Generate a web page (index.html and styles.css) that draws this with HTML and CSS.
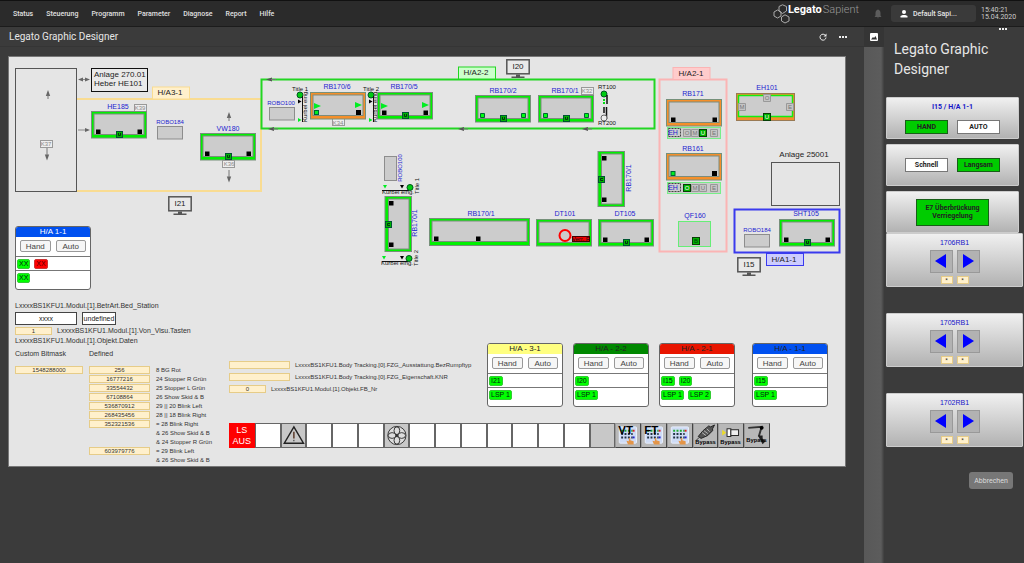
FILE: index.html
```html
<!DOCTYPE html>
<html lang="de">
    <head>
    <meta charset="utf-8">
    <title>Legato Graphic Designer</title>
    <link rel="stylesheet" href="styles.css">
    </head>
    <body>
    <header class="topbar">
        <nav class="menu">
            <a href="#">Status</a>
            <a href="#">Steuerung</a>
            <a href="#">Programm</a>
            <a href="#">Parameter</a>
            <a href="#">Diagnose</a>
            <a href="#">Report</a>
            <a href="#">Hilfe</a>
        </nav>
        <div class="logo">
            <svg width="18" height="20" viewBox="0 0 18 20" fill="none" stroke="#aaa">
                <path d="M6 2.500 9.500 .8 13.500 2.500V7L9.500 9.500 6 7zM1 8 4.500 6 8 8V12L4.500 14 1 12zM8.500 13 12 10.800 16 13V17L12 19 8.500 17z"/>
            </svg>
            <strong>Legato</strong><span>Sapient</span>
        </div>
        <svg class="bell" width="8" height="10" viewBox="0 0 8 10"><path d="M4 0.500C5.500 1 6.500 2 6.500 4V6.500L7.500 8H.5L1.500 6.500V4C1.500 2 2.500 1 4 .5zM3 8.500H5L4 9.500z" fill="#5c5c5c"/></svg>
        <button class="user" type="button">
            <svg width="8" height="8" viewBox="0 0 8 8" fill="#fff"><circle cx="4" cy="2" r="2"/><path d="M.5 7.500V6.500C.5 4.500 7.500 4.500 7.500 6.500V7.500z"/></svg>
            Default Sapi...
        </button>
        <div class="clock">15:40:21<br>15.04.2020</div>
    </header>

    <div class="layout">
    <main class="main">
        <div class="titlebar">
            <h1>Legato Graphic Designer</h1>
            <button class="icon" type="button" aria-label="Neu laden"><svg width="8" height="8" viewBox="0 0 8 8"><path d="M6.500 2.500A3 3 0 1 0 7 4.500" fill="none" stroke="#eee"/><path d="M7.500 .5V3.500H4.500z" fill="#eee"/></svg></button>
            <button class="icon" type="button" aria-label="Mehr"><svg width="8" height="8" viewBox="0 0 8 8" fill="#eee"><rect x="0" y="3" width="2" height="2"/><rect x="3" y="3" width="2" height="2"/><rect x="6" y="3" width="2" height="2"/></svg></button>
        </div>

        <div class="canvas">
            <svg class="plant" viewBox="9 57 836 226">
                <defs>
                    <symbol id="station" viewBox="0 0 56 28">
                        <rect x=".5" y=".5" width="55" height="26.500" fill="currentColor" stroke="#76907a"/>
                        <rect x="3" y="3" width="50" height="20.500" fill="#ccc" stroke="#7c8c7c"/>
                    </symbol>
                    <symbol id="dots" viewBox="0 0 56 28">
                        <path d="M5 18.500h4.500v4.500h-4.500zM46.500 18.500h4.500v4.500h-4.500z"/>
                    </symbol>
                    <symbol id="dots-on" viewBox="0 0 56 28">
                        <path d="M5.500 18.500h4v4h-4zM46.500 18.500h4v4h-4z" fill="#0f1" stroke="#063"/>
                    </symbol>
                    <symbol id="badge" viewBox="0 0 7 7">
                        <rect x=".5" y=".5" width="6" height="6" fill="#00b400" stroke="#053"/>
                        <path d="M2.500 2V4.500H4.500V2" fill="none" stroke="#031"/>
                    </symbol>
                    <symbol id="robot" viewBox="0 0 26 14">
                        <rect x=".5" y=".5" width="25" height="12.500" fill="#ccc" stroke="#8d8d8d"/>
                    </symbol>
                    <symbol id="screen" viewBox="0 0 24 20">
                        <rect x=".8" y=".8" width="22.400" height="14" fill="#e9e9e9" stroke="#555" stroke-width="1.500"/>
                        <path d="M10 15.500H14V17.500H18.500V19H5.500V17.500H10z" fill="#555"/>
                    </symbol>
                    <symbol id="up" viewBox="0 0 6 10">
                        <path d="M3 0 5.200 6H.8z" fill="#666"/><path d="M3 5V9" stroke="#777"/>
                    </symbol>
                    <symbol id="down" viewBox="0 0 6 13">
                        <path d="M3 12.500 5.200 6.500H.8z" fill="#666"/><path d="M3 0V7" stroke="#777"/>
                    </symbol>
                    <symbol id="flow" viewBox="0 0 10 6">
                        <path d="M0 3 6 1V5z" fill="#555"/><path d="M5 3H10" stroke="#777"/>
                    </symbol>
                    <symbol id="play" viewBox="0 0 7 6"><path d="M0 0 7 3 0 6z" fill="#0e2"/></symbol>
                    <symbol id="crane" viewBox="0 0 12 36">
                        <circle cx="4" cy="4" r="3" fill="#0c1" stroke="#052"/>
                        <path d="M6.500 5V31" stroke="#111"/>
                        <path d="M2 8.500 5.500 10.500 2 12.500z"/>
                        <path d="M2 27 5.500 29 2 31z" fill="#0e2"/>
                    </symbol>
                </defs>

                <!-- Heber und H/A 3-1 -->
                <path class="area yellow" d="M77 99H261V191H77"/>
                <rect class="frame" x="15.500" y="68.500" width="61" height="123"/>
                <use href="#up" x="45" y="90" width="6" height="10"/>
                <rect class="key" x="40.500" y="140.500" width="12" height="7"/>
                <text class="keytext" x="46" y="146">K37</text>
                <use href="#down" x="44" y="148" width="6" height="13"/>
                <rect class="note" x="91.500" y="68.500" width="56" height="23"/>
                <text class="big" x="94" y="77">Anlage 270.01</text>
                <text class="big" x="94" y="86">Heber HE101</text>
                <path class="line" d="M79 79.500H89M78 130H87"/>
                <path class="head" d="M78 79.500 83 77.500V81.500zM90 79.500 85 77.500V81.500zM90 130 85 128V132z"/>
                <rect class="tag yellow" x="152.500" y="87" width="37" height="12"/>
                <text class="big mid" x="170" y="95">H/A3-1</text>

                <text class="name" x="118" y="109">HE185</text>
                <rect class="key" x="134.500" y="104.500" width="12" height="7"/>
                <text class="keytext" x="140" y="110">K39</text>
                <g class="ok" transform="translate(91 111)">
                    <use href="#station" width="56" height="28"/><use href="#dots" width="56" height="28"/><use href="#badge" x="25" y="20" width="7" height="7"/>
                </g>
                <text class="name small" x="170" y="124">ROBO184</text>
                <use href="#robot" x="157" y="126" width="26" height="14"/>
                <use href="#up" x="226" y="112" width="6" height="10"/>
                <text class="name" x="228" y="131">VW180</text>
                <g class="ok" transform="translate(200 133)">
                    <use href="#station" width="56" height="28"/><use href="#dots" width="56" height="28"/><use href="#badge" x="25" y="20" width="7" height="7"/>
                </g>
                <rect class="key" x="222.500" y="160.500" width="12" height="7"/>
                <text class="keytext" x="229" y="166">K36</text>
                <use href="#down" x="226" y="170" width="6" height="13"/>
                <use href="#screen" x="168" y="196" width="24" height="20"/>
                <text class="big mid" x="180" y="206">I21</text>

                <!-- H/A 2-2 -->
                <rect class="area green" x="261.500" y="79.500" width="393" height="49"/>
                <use href="#flow" x="266" y="76.500" width="10" height="6"/>
                <use href="#flow" x="268" y="126" width="10" height="6"/>
                <use href="#flow" x="458" y="126" width="10" height="6"/>
                <use href="#flow" x="582" y="126" width="10" height="6"/>
                <rect class="tag green" x="458.500" y="67" width="37" height="12"/>
                <text class="big mid" x="476" y="75">H/A2-2</text>
                <use href="#screen" x="506" y="59" width="24" height="20"/>
                <text class="big mid" x="518" y="69">I20</text>
                <text class="name small" x="281" y="105">ROBO100</text>
                <use href="#robot" x="269" y="107" width="26" height="14"/>
                <text class="cranetext mid" x="300" y="91">Title 1</text>
                <use href="#crane" x="296" y="91" width="12" height="36"/>
                <text class="cranetext" transform="translate(307 122) rotate(-90)">Kurbel eing.</text>
                <text class="name" x="337" y="89">RB170/6</text>
                <rect class="key" x="332.500" y="118.500" width="12" height="7"/>
                <text class="keytext" x="338" y="125">K34</text>
                <g class="warn" transform="translate(310 92)">
                    <use href="#station" width="56" height="28"/>
                    <use href="#play" x="4" y="11" width="7" height="6"/><use href="#play" x="45" y="10" width="7" height="6"/>
                    <rect x="4.500" y="18.500" width="4" height="4" fill="#0e2" stroke="#063"/>
                    <rect x="46" y="18" width="5" height="5"/>
                </g>
                <text class="cranetext mid" x="371" y="91">Title 2</text>
                <use href="#crane" x="367" y="91" width="12" height="36"/>
                <text class="cranetext" transform="translate(377 122) rotate(-90)">Kurbel eing.</text>
                <text class="name" x="404" y="89">RB170/5</text>
                <g class="ok" transform="translate(377 92)">
                    <use href="#station" width="56" height="28"/><use href="#dots" width="56" height="28"/>
                    <use href="#play" x="4" y="11" width="7" height="6"/><use href="#play" x="45" y="10" width="7" height="6"/>
                    <use href="#badge" x="25" y="20" width="7" height="7"/>
                </g>
                <text class="name" x="503" y="93">RB170/2</text>
                <g class="ok" transform="translate(475 95)">
                    <use href="#station" width="56" height="28"/><use href="#dots-on" width="56" height="28"/><use href="#badge" x="25" y="20" width="7" height="7"/>
                </g>
                <text class="name" x="565" y="93">RB170/1</text>
                <rect class="key" x="581.500" y="87.500" width="12" height="7"/>
                <text class="keytext" x="587" y="93">K32</text>
                <g class="ok" transform="translate(538 95)">
                    <use href="#station" width="56" height="28"/><use href="#dots-on" width="56" height="28"/><use href="#badge" x="25" y="20" width="7" height="7"/>
                </g>
                <text class="cranetext mid" x="607" y="89">RT100</text>
                <circle cx="604" cy="94" r="3" fill="#0c1" stroke="#052"/>
                <path d="M607 95V104M606.500 107V119M604 107V113" stroke="#111" stroke-width="1.500"/>
                <path d="M604 99V105" stroke="#0d1" stroke-width="2" stroke-dasharray="2 1"/>
                <circle cx="604" cy="118" r="3" fill="#eee" stroke="#666"/>
                <text class="cranetext mid" x="607" y="125">RT200</text>

                <!-- Drehtische -->
                <rect x="384.500" y="156.500" width="12" height="24" fill="#ccc" stroke="#8d8d8d"/>
                <text class="name small" transform="translate(402 168) rotate(-90)">ROBO100</text>
                <path d="M382 190.500H409" stroke="#111"/>
                <path d="M383 185H387L385 188.500z" fill="#0e2"/><path d="M400 185H404L402 188.500z"/>
                <circle cx="410" cy="187.500" r="3" fill="#0c1" stroke="#052"/>
                <text class="cranetext" x="382" y="194">Kurbel eing.</text>
                <text class="cranetext" transform="translate(419 194) rotate(-90)">Title 1</text>
                <g class="ok" transform="translate(412 196) rotate(90)">
                    <use href="#station" width="56" height="28"/><use href="#dots" width="56" height="28"/><use href="#badge" x="25" y="20" width="7" height="7"/>
                </g>
                <text class="name" transform="translate(417 223) rotate(-90)">RB170/1</text>
                <path d="M382 261.500H408" stroke="#111"/>
                <path d="M382 256H386L384 259.500z" fill="#0e2"/><path d="M400 256H404L402 259.500z"/>
                <circle cx="409" cy="258.500" r="3" fill="#0c1" stroke="#052"/>
                <text class="cranetext" x="381" y="265">Kurbel eing.</text>
                <text class="cranetext" transform="translate(418 266) rotate(-90)">Title 2</text>
                <text class="name" x="481" y="216">RB170/1</text>
                <rect x="429.500" y="218.500" width="100" height="27" fill="#00f000" stroke="#76907a"/>
                <rect x="432" y="221" width="95" height="20.500" fill="#ccc" stroke="#7c8c7c"/>
                <path d="M434 236.500h4.500v4.500h-4.500zM476 236.500h4.500v4.500h-4.500z"/>
                <text class="name" x="565" y="216">DT101</text>
                <g class="ok" transform="translate(536 219)">
                    <use href="#station" width="56" height="28"/>
                    <circle cx="29" cy="16.500" r="5.500" fill="none" stroke="#f00" stroke-width="2"/>
                    <rect x="36.500" y="17.500" width="17" height="5" fill="#e00" stroke="#400"/>
                    <text class="cranetext mid" x="45" y="22">Verr. R</text>
                </g>
                <text class="name" x="625" y="216">DT105</text>
                <g class="ok" transform="translate(598 219)">
                    <use href="#station" width="56" height="28"/><use href="#dots" width="56" height="28"/><use href="#badge" x="25" y="20" width="7" height="7"/>
                </g>
                <g class="ok" transform="translate(625 151) rotate(90)">
                    <use href="#station" width="56" height="28"/><use href="#dots" width="56" height="28"/><use href="#badge" x="25" y="20" width="7" height="7"/>
                </g>
                <text class="name" transform="translate(631 178) rotate(-90)">RB170/1</text>

                <!-- H/A 2-1 -->
                <rect class="area red" x="659.500" y="79.500" width="67" height="172"/>
                <rect class="tag red" x="673" y="67.500" width="37" height="12"/>
                <text class="big mid" x="691" y="76">H/A2-1</text>
                <text class="name" x="693" y="96">RB171</text>
                <g class="warn" transform="translate(666 99)">
                    <use href="#station" width="56" height="28"/><use href="#dots" width="56" height="28"/>
                </g>
                <rect x="667.500" y="127.500" width="53" height="11" fill="#ccc" stroke="#7e8"/>
                <rect x="668.500" y="128.500" width="12" height="8" class="dashed"/>
                <text class="name" x="673" y="135">EH</text>
                <path class="cell" d="M683.500 129.500h7v7h-7zM691.500 129.500h7v7h-7zM710.500 129.500h7v7h-7z"/>
                <rect class="cell on" x="699.500" y="129.500" width="7" height="7"/>
                <g class="letters"><text x="687" y="135">O</text><text x="695" y="135">M</text><text class="lit" x="703" y="135">U</text><text x="714" y="135">E</text></g>
                <text class="name" x="693" y="151">RB161</text>
                <g class="warn" transform="translate(666 153)">
                    <use href="#station" width="56" height="28"/>
                    <rect x="5" y="18.500" width="4" height="4" fill="#0e2" stroke="#063"/><rect x="46" y="18" width="5" height="5"/>
                </g>
                <rect x="667.500" y="182.500" width="53" height="11" fill="#ccc" stroke="#7e8"/>
                <rect x="668.500" y="183.500" width="12" height="8" class="dashed"/>
                <text class="name" x="673" y="190">EH</text>
                <path class="cell" d="M691.500 184.500h7v7h-7zM699.500 184.500h7v7h-7zM710.500 184.500h7v7h-7z"/>
                <rect class="cell on" x="683.500" y="184.500" width="7" height="7"/>
                <g class="letters"><text class="lit" x="687" y="190">O</text><text x="695" y="190">M</text><text x="703" y="190">U</text><text x="714" y="190">E</text></g>
                <text class="name" x="695" y="218">QF160</text>
                <rect x="678.500" y="221.500" width="32" height="25" fill="#ccc" stroke="#6e7"/>
                <rect class="cell on" x="692.500" y="237.500" width="7" height="7"/>
                <g class="letters"><text class="dark" x="696" y="243">B</text></g>

                <!-- EH101, Anlage 25001, H/A 1-1 -->
                <text class="name" x="767" y="90">EH101</text>
                <rect x="736.500" y="93.500" width="58" height="27" fill="#f58f2a" stroke="#997a55"/>
                <rect x="738.500" y="95.500" width="54" height="21" fill="#ccc" stroke="#1e1" stroke-width="1.500"/>
                <path class="cell" d="M763.500 94.500h7v7h-7zM738.500 103.500h7v7h-7zM786.500 103.500h7v7h-7z"/>
                <rect class="cell on" x="763.500" y="113.500" width="7" height="7"/>
                <g class="letters"><text x="767" y="100">O</text><text x="742" y="109">M</text><text x="790" y="109">E</text><text class="lit" x="767" y="119">U</text></g>
                <text class="big mid" x="804" y="157">Anlage 25001</text>
                <rect class="frame" x="771.500" y="162.500" width="68" height="43"/>
                <rect class="area blue" x="734.500" y="209.500" width="105" height="43"/>
                <text class="name small" x="757" y="232">ROBO184</text>
                <use href="#robot" x="744" y="234" width="26" height="14"/>
                <text class="name" x="806" y="216">SHT105</text>
                <g class="ok" transform="translate(779 219)">
                    <use href="#station" width="56" height="28"/><use href="#dots" width="56" height="28"/><use href="#badge" x="25" y="20" width="7" height="7"/>
                </g>
                <rect class="tag blue" x="766.500" y="253.500" width="37" height="12"/>
                <text class="big mid" x="784" y="262">H/A1-1</text>
                <use href="#screen" x="737" y="257" width="24" height="20"/>
                <text class="big mid" x="749" y="267">I15</text>
            </svg>

            <section class="card floating">
                <h2 class="bg-blue light">H/A 1-1</h2>
                <div class="modes"><button type="button">Hand</button><button type="button">Auto</button></div>
                <div class="lamps"><span>XX</span><span class="fault">XX</span></div>
                <div class="lamps"><span>XX</span></div>
            </section>

            <div class="lower">
                <form class="bits">
                    <label for="station-art">LxxxxBS1KFU1.Modul.[1].BetrArt.Bed_Station</label>
                    <div class="row boxes">
                        <input id="station-art" class="wide" value="xxxx">
                        <input class="narrow" value="undefined" aria-label="Status">
                    </div>
                    <div class="row">
                        <input id="tasten" class="value short" value="1">
                        <label for="tasten">LxxxxBS1KFU1.Modul.[1].Von_Visu.Tasten</label>
                    </div>
                    <p>LxxxxBS1KFU1.Modul.[1].Objekt.Daten</p>
                    <div class="masks">
                        <label class="head" for="mask">Custom Bitmask</label>
                        <span class="head">Defined</span>
                        <span></span>
                        <input id="mask" class="value" value="1548288000">
                        <input id="b1" class="value" value="256"><label for="b1">8 BG Rot</label>
                        <input id="b2" class="value def" value="16777216"><label for="b2">24 Stopper R Grün</label>
                        <input id="b3" class="value def" value="33554432"><label for="b3">25 Stopper L Grün</label>
                        <input id="b4" class="value def" value="67108864"><label for="b4">26 Show Skid &amp; B</label>
                        <input id="b5" class="value def" value="536870912"><label for="b5">29 || 20 Blink Left</label>
                        <input id="b6" class="value def" value="268435456"><label for="b6">28 || 18 Blink Right</label>
                        <input id="b7" class="value def" value="352321536"><label for="b7">= 28 Blink Right<br>&amp; 26 Show Skid &amp; B<br>&amp; 24 Stopper R Grün</label>
                        <input id="b8" class="value def" value="603979776"><label for="b8">= 29 Blink Left<br>&amp; 26 Show Skid &amp; B</label>
                    </div>
                </form>

                <div class="right">
                    <div class="overview">
                        <form class="tracking">
                            <div class="row"><input id="t1" class="value"><label for="t1">LxxxxBS1KFU1.Body Tracking.[0].FZG_Ausstattung.BezRumpftyp</label></div>
                            <div class="row"><input id="t2" class="value"><label for="t2">LxxxxBS1KFU1.Body Tracking.[0].FZG_Eigenschaft.KNR</label></div>
                            <div class="row"><input id="t3" class="value short" value="0"><label for="t3">LxxxxBS1KFU1.Modul.[1].Objekt.FB_Nr</label></div>
                        </form>
                        <div class="cards">
                            <section class="card">
                                <h2 class="bg-yellow">H/A - 3-1</h2>
                                <div class="modes"><button type="button">Hand</button><button type="button">Auto</button></div>
                                <div class="lamps"><span>I21</span></div>
                                <div class="lamps"><span>LSP 1</span></div>
                            </section>
                            <section class="card">
                                <h2 class="bg-green">H/A - 2-2</h2>
                                <div class="modes"><button type="button">Hand</button><button type="button">Auto</button></div>
                                <div class="lamps"><span>I20</span></div>
                                <div class="lamps"><span>LSP 1</span></div>
                            </section>
                            <section class="card">
                                <h2 class="bg-red">H/A - 2-1</h2>
                                <div class="modes"><button type="button">Hand</button><button type="button">Auto</button></div>
                                <div class="lamps"><span>I15</span><span>I20</span></div>
                                <div class="lamps"><span>LSP 1</span><span>LSP 2</span></div>
                            </section>
                        </div>
                        <section class="card">
                            <h2 class="bg-blue">H/A - 1-1</h2>
                            <div class="modes"><button type="button">Hand</button><button type="button">Auto</button></div>
                            <div class="lamps"><span>I15</span></div>
                            <div class="lamps"><span>LSP 1</span></div>
                        </section>
                    </div>

                    <div class="tools">
                        <button type="button" class="off">LS<br>AUS</button>
                        <button type="button" aria-label="Frei 1"></button>
                        <button type="button" class="gray" aria-label="Warnung"><svg viewBox="0 0 24 24" fill="none" stroke="#222"><path d="M12 3 22 20H2z" stroke-width="1.500"/><path d="M12 8V15" stroke="#532" stroke-width="1.500"/><path d="M12 16.500V18"/></svg></button>
                        <button type="button" aria-label="Frei 2"></button>
                        <button type="button" aria-label="Frei 3"></button>
                        <button type="button" aria-label="Frei 4"></button>
                        <button type="button" class="gray" aria-label="Lüfter"><svg viewBox="0 0 24 24" fill="#ddd" stroke="#333"><circle cx="12" cy="12" r="9.500"/><ellipse cx="12" cy="7" rx="3" ry="4"/><ellipse cx="12" cy="17" rx="3" ry="4"/><ellipse cx="7" cy="12" rx="4" ry="3"/><ellipse cx="17" cy="12" rx="4" ry="3"/><circle cx="12" cy="12" r="1" fill="#333"/></svg></button>
                        <button type="button" aria-label="Frei 5"></button>
                        <button type="button" aria-label="Frei 6"></button>
                        <button type="button" aria-label="Frei 7"></button>
                        <button type="button" aria-label="Frei 8"></button>
                        <button type="button" aria-label="Frei 9"></button>
                        <button type="button" aria-label="Frei 10"></button>
                        <button type="button" aria-label="Frei 11"></button>
                        <button type="button" class="gray" aria-label="Frei 12"></button>
                        <button type="button" class="gray raised" aria-label="VT"><svg viewBox="0 0 24 24"><use href="#matrix"/><text x="2" y="10" class="tooltext">VT</text></svg></button>
                        <button type="button" class="gray raised" aria-label="FT"><svg viewBox="0 0 24 24"><use href="#matrix"/><text x="2" y="10" class="tooltext">FT</text></svg></button>
                        <button type="button" class="gray raised" aria-label="Matrix"><svg viewBox="0 0 24 24">
                            <g id="matrix">
                                <rect x="3" y="3" width="18" height="17" rx="1" fill="#cfdcf6" stroke="#e9effc"/>
                                <path d="M5 7h12" stroke="#2a3" stroke-width="2" stroke-dasharray="2 1.500"/>
                                <path d="M5 10.500h12M5 14h12" stroke="#234" stroke-width="2" stroke-dasharray="2 1.500"/>
                                <path d="M17 6h2v2h-2z" fill="#d22"/><path d="M17 13h2v2h-2z" fill="#22c"/>
                                <path d="M12 21 10.500 17.500 13 18V14.500H14.500V17L18 18V21.500H13z" fill="#e39548"/>
                            </g>
                        </svg></button>
                        <button type="button" class="gray raised" aria-label="Bypass Stecker"><svg viewBox="0 0 24 24"><path d="M4 13 9 7 15 2 17 3 21 1 19 5 19 7 14 12 7 15z" fill="#555" stroke="#222"/><path d="M8 9 12 12M10 7 14 10M13 5 16 8" stroke="#bbb"/><path d="M2 17 5 14" stroke="#333"/><text x="1" y="21" class="tooltext tiny">Bypass</text></svg></button>
                        <button type="button" class="gray raised" aria-label="Bypass Motor"><svg viewBox="0 0 24 24"><path d="M3 6 7 9 3 12z" fill="#ed2"/><rect x="8" y="5" width="4" height="8" fill="#fff" stroke="#222"/><rect x="12" y="6" width="8" height="6" fill="#eee" stroke="#222"/><text x="1" y="21" class="tooltext tiny">Bypass</text></svg></button>
                        <button type="button" class="gray raised" aria-label="Bypass Roboter"><svg viewBox="0 0 24 24"><path d="M3 4 17 3 14 13" fill="none" stroke="#333" stroke-width="2"/><circle cx="17" cy="4" r="2"/><path d="M13 12h5v3l3 3-3 3z" fill="#222"/><text x="1" y="19" class="tooltext tiny">Bypass</text></svg></button>
                    </div>
                </div>
            </div>
        </div>
    </main>

    <div class="strip">
        <button class="tab" type="button" aria-label="Bild"><svg width="10" height="8" viewBox="0 0 10 8"><rect x="1" width="8" height="8" rx="1" fill="#fff"/><path d="M2 6.500 4 4 5 5 6.500 3 8 6.500z" fill="#333"/></svg></button>
    </div>

    <aside class="side">
        <button class="icon more" type="button" aria-label="Mehr"><svg width="8" height="4" viewBox="0 0 8 4" fill="#eee"><rect y="1" width="2" height="2"/><rect x="3" y="1" width="2" height="2"/><rect x="6" y="1" width="2" height="2"/></svg></button>
        <h2>Legato Graphic Designer</h2>
        <div class="panels">
            <section class="panel">
                <h3>I15 / H/A 1-1</h3>
                <div class="pair"><button type="button" class="on">HAND</button><button type="button">AUTO</button></div>
            </section>
            <section class="panel">
                <div class="pair"><button type="button">Schnell</button><button type="button" class="on">Langsam</button></div>
            </section>
            <section class="panel">
                <button type="button" class="on bridge">E7 Überbrückung Verriegelung</button>
            </section>
        </div>
        <div class="jogs">
            <section class="panel jog">
                <h3>1706RB1</h3>
                <div class="arrows">
                    <button type="button" aria-label="Zurück"><svg width="12" height="14" viewBox="0 0 12 14"><path d="M0 7 11 0V14z" fill="#00f"/></svg></button>
                    <button type="button" aria-label="Vor"><svg width="12" height="14" viewBox="0 0 12 14"><path d="M12 7 1 0V14z" fill="#00f"/></svg></button>
                </div>
                <div class="states"><input value="*" aria-label="Zurück aktiv"><input value="*" aria-label="Vor aktiv"></div>
            </section>
            <section class="panel jog">
                <h3>1705RB1</h3>
                <div class="arrows">
                    <button type="button" aria-label="Zurück"><svg width="12" height="14" viewBox="0 0 12 14"><path d="M0 7 11 0V14z" fill="#00f"/></svg></button>
                    <button type="button" aria-label="Vor"><svg width="12" height="14" viewBox="0 0 12 14"><path d="M12 7 1 0V14z" fill="#00f"/></svg></button>
                </div>
                <div class="states"><input value="*" aria-label="Zurück aktiv"><input value="*" aria-label="Vor aktiv"></div>
            </section>
            <section class="panel jog">
                <h3>1702RB1</h3>
                <div class="arrows">
                    <button type="button" aria-label="Zurück"><svg width="12" height="14" viewBox="0 0 12 14"><path d="M0 7 11 0V14z" fill="#00f"/></svg></button>
                    <button type="button" aria-label="Vor"><svg width="12" height="14" viewBox="0 0 12 14"><path d="M12 7 1 0V14z" fill="#00f"/></svg></button>
                </div>
                <div class="states"><input value="*" aria-label="Zurück aktiv"><input value="*" aria-label="Vor aktiv"></div>
            </section>
        </div>
        <button class="cancel" type="button">Abbrechen</button>
    </aside>
    </div>
    </body>
</html>
```

FILE: styles.css
```css
*
{
    box-sizing: border-box;
}

body
{
    margin: 0;
    min-height: 100vh;
    display: flex;
    flex-direction: column;
    background-color: #3b3b3b;
    color: #e6e6e6;
    font-family: Roboto, sans-serif;
    font-size: 7px;
}

h1, h2, h3, p
{
    margin: 0;
    font-weight: normal;
}

button, input
{
    margin: 0;
    padding: 0;
    font: inherit;
    color: inherit;
    border-radius: 0;
}

/* top bar */
.topbar
{
    display: flex;
    align-items: center;
    height: 27px;
    padding: 0 5px 0 13px;
    background-color: #2b2b2b;
    border-top: 1px solid #111;
    border-bottom: 1px solid #1c1c1c;
}

.menu
{
    display: flex;
    flex: 1;
    gap: 13px;
    font-weight: 500;
}

.menu a
{
    color: #e0e0e0;
    text-decoration: none;
}

.logo
{
    display: flex;
    align-items: center;
    height: 24px;
    font-size: 11px;
    line-height: 12px;
    color: #999;
}

.logo strong, .logo span
{
    align-self: flex-start;
    padding-top: 2px;
}

.logo strong
{
    margin-left: -3px;
    color: #fff;
}

.logo span
{
    margin-left: 1px;
    font-weight: 300;
}

.bell
{
    margin: 0 9px 0 15px;
}

.user
{
    display: flex;
    align-items: center;
    gap: 5px;
    width: 85px;
    height: 17px;
    padding-left: 9px;
    border: none;
    border-radius: 3px;
    background-color: #3a3a3a;
    font-weight: 500;
}

.clock
{
    width: 38px;
    margin-left: 5px;
    line-height: 7px;
    color: #ccc;
}

/* page columns */
.layout
{
    display: flex;
    flex: 1;
}

.main
{
    flex: 1;
    min-width: 0;
}

.titlebar
{
    display: flex;
    align-items: center;
    gap: 12px;
    height: 20px;
    padding: 0 17px 0 9px;
    border-bottom: 1px solid #353535;
}

.titlebar h1
{
    flex: 1;
    font-size: 10px;
}

.icon
{
    display: flex;
    border: none;
    background: none;
}

.strip
{
    width: 20px;
    background: linear-gradient(to right, #585858, #5c5c5c 85%, #3e3e3e);
}

.tab
{
    display: flex;
    align-items: center;
    justify-content: center;
    width: 20px;
    height: 20px;
    border: none;
    background-color: #353535;
}

/* drawing area */
.canvas
{
    position: relative;
    margin: 10px 19px 0 9px;
    padding-bottom: 1px;
    background-color: #e5e5e5;
    color: #333;
    font-family: "Liberation Sans", Arial, sans-serif;
    box-shadow: 0 0 0 1px #777;
}

.plant
{
    display: block;
    width: 100%;
    height: auto;
}

.ok
{
    color: #00f000;
}

.warn
{
    color: #f58f2a;
}

.name
{
    font-size: 7px;
    fill: #1d1dd0;
    text-anchor: middle;
}

.name.small
{
    font-size: 6px;
}

.big
{
    font-size: 8px;
    fill: #222;
}

.mid
{
    text-anchor: middle;
}

.cranetext
{
    font-size: 6px;
    fill: #111;
}

.key
{
    fill: #eee;
    stroke: #999;
}

.keytext
{
    font-size: 6px;
    fill: #888;
    text-anchor: middle;
}

.area
{
    fill: none;
    stroke-width: 2;
}

.area.yellow, .tag.yellow
{
    stroke: #f9dc92;
}

.area.green, .tag.green
{
    stroke: #22d622;
}

.area.red, .tag.red
{
    stroke: #fbb4b4;
}

.area.blue, .tag.blue
{
    stroke: #3a3aee;
}

.tag.yellow
{
    fill: #fff0cc;
}

.tag.green
{
    fill: #ccffcc;
}

.tag.red
{
    fill: #ffcccc;
}

.tag.blue
{
    fill: #ccccff;
}

.frame
{
    fill: none;
    stroke: #555;
}

.note
{
    fill: #e9e9e9;
    stroke: #111;
}

.line
{
    stroke: #888;
}

.head
{
    fill: #666;
}

.dashed
{
    fill: none;
    stroke: #444;
    stroke-dasharray: 2 1;
}

.cell
{
    fill: #c4c4c4;
    stroke: #999;
}

.cell.on
{
    fill: #00b400;
    stroke: #064006;
}

.letters
{
    font-size: 6px;
    fill: #777;
    text-anchor: middle;
}

.lit
{
    fill: #fff;
}

.dark
{
    fill: #031;
}

/* station cards */
.card
{
    width: 76px;
    height: 64px;
    border: 1px solid #666;
    border-radius: 3px;
    background-color: #fff;
    overflow: hidden;
}

.card.floating
{
    position: absolute;
    left: 6px;
    top: 169px;
}

.card h2
{
    height: 10px;
    font-size: 8px;
    line-height: 10px;
    text-align: center;
    color: #222;
}

.card .light
{
    color: #fff;
}

.bg-yellow
{
    background-color: #ffff80;
}

.bg-green
{
    background-color: #008800;
}

.bg-red
{
    background-color: #e81500;
}

.bg-blue
{
    background-color: #0050f0;
}

.modes
{
    display: flex;
    gap: 5px;
    height: 19px;
    padding: 3px 4px;
}

.modes button
{
    flex: 1;
    height: 12px;
    border: 1px solid #999;
    border-radius: 2px;
    background-color: #f6f6f6;
    color: #444;
    font-size: 8px;
    line-height: 9px;
}

.lamps
{
    display: flex;
    gap: 4px;
    height: 14px;
    padding: 2px 1px;
    border-top: 1px solid #777;
}

.lamps span
{
    height: 10px;
    padding: 0 1px;
    border: 1px solid #3c3;
    border-radius: 2px;
    background-color: #00ff00;
    color: #021;
    font-size: 7px;
    line-height: 8px;
}

.lamps .fault
{
    background-color: #ff0000;
    border-color: #c33;
    color: #500;
}

/* variables below the plant */
.lower
{
    display: flex;
}

.bits
{
    width: 220px;
    padding: 18px 0 0 6px;
    line-height: 10px;
}

.bits > label, .bits > p
{
    display: block;
    height: 10px;
    font-size: 7px;
}

.row
{
    display: flex;
    align-items: center;
    gap: 5px;
}

.boxes
{
    height: 15px;
}

.boxes input
{
    height: 13px;
    border: 1px solid #444;
    background-color: #fff;
    text-align: center;
    font-size: 7px;
    color: #222;
}

.boxes .wide
{
    width: 62px;
}

.boxes .narrow
{
    width: 34px;
}

.value
{
    width: 61px;
    height: 8px;
    border: 1px solid #e6cc88;
    background-color: #fff0cc;
    text-align: center;
    font-size: 6px;
    line-height: 6px;
    color: #333;
}

.value.short
{
    width: 37px;
}

.masks
{
    display: grid;
    grid-template-columns: 68px 61px 1fr;
    column-gap: 6px;
    padding-top: 3px;
    font-size: 6px;
    line-height: 9px;
}

.masks .value
{
    width: 100%;
}

.masks .def
{
    grid-column: 2;
}

.masks .head
{
    height: 17px;
    font-size: 7px;
}

.masks label
{
    white-space: nowrap;
}

.right
{
    flex: 1;
    min-width: 0;
    padding-top: 60px;
}

.overview
{
    display: flex;
    padding-right: 17px;
}

.tracking
{
    display: flex;
    flex: 1;
    flex-direction: column;
    gap: 4px;
    min-width: 0;
    padding-top: 18px;
    font-size: 6px;
    white-space: nowrap;
}

.cards
{
    display: flex;
    gap: 10px;
    margin-right: 17px;
}

.tools
{
    display: grid;
    grid-template-columns: repeat(21, 1fr);
    max-width: 541px;
    margin-top: 16px;
}

.tools button
{
    height: 25px;
    border: 1px solid #666;
    background-color: #fff;
    overflow: hidden;
}

.tools .off
{
    border-color: #f00;
    background-color: #f00;
    color: #fff;
    font-size: 9px;
    line-height: 11px;
}

.tools .gray
{
    background-color: #c8c8c8;
}

.tools .raised
{
    border: 1px outset #999;
    background-color: #b8b8b8;
}

.tools svg
{
    display: block;
    width: 100%;
    height: 100%;
}

.tooltext
{
    font-size: 12px;
    font-weight: bold;
}

.tooltext.tiny
{
    font-size: 6px;
}

/* right column */
.side
{
    display: flex;
    flex-direction: column;
    width: 140px;
}

.side .more
{
    align-self: flex-end;
    margin-right: 17px;
    height: 4px;
}

.side h2
{
    padding: 8px 20px 8px 10px;
    font-size: 14px;
    line-height: 20px;
}

.panels
{
    display: flex;
    flex-direction: column;
    gap: 5px;
    padding: 10px 5px 0 2px;
}

.jogs
{
    display: flex;
    flex-direction: column;
    gap: 26px;
    padding: 0 1px 0 2px;
}

.panel
{
    display: flex;
    flex-direction: column;
    align-items: center;
    justify-content: center;
    gap: 9px;
    height: 42px;
    border: 1px solid #ccc;
    border-radius: 1px;
    background: linear-gradient(#f0f0f0, #b2b2b2);
    color: #222;
}

.panel h3
{
    font-size: 7px;
    line-height: 8px;
    font-weight: bold;
    color: #1414c8;
}

.pair
{
    display: flex;
    gap: 9px;
}

.pair button, .bridge
{
    width: 43px;
    height: 14px;
    border: 1px solid #777;
    background-color: #fff;
    font-size: 7px;
    font-weight: bold;
}

.panel .bridge
{
    width: 73px;
    height: 27px;
    line-height: 8px;
}

.panel .on
{
    border-color: #185e18;
    background-color: #00cc00;
}

.jog
{
    height: 54px;
    gap: 3px;
    padding-top: 2px;
}

.panel.jog h3
{
    font-family: "Liberation Sans", Arial, sans-serif;
    font-weight: normal;
}

.arrows, .states
{
    display: flex;
    gap: 4px;
}

.arrows button
{
    display: flex;
    align-items: center;
    justify-content: center;
    width: 23px;
    height: 23px;
    border: 1px solid #999;
    background-color: #b2b2b2;
}

.states input
{
    width: 12px;
    height: 8px;
    border: 1px solid #e6cc88;
    background-color: #fff0cc;
    text-align: center;
    font-size: 6px;
}

.cancel
{
    align-self: flex-end;
    width: 44px;
    height: 17px;
    margin: 25px 11px 0 0;
    border: none;
    border-radius: 3px;
    background-color: #777;
    color: #ddd;
}
```
